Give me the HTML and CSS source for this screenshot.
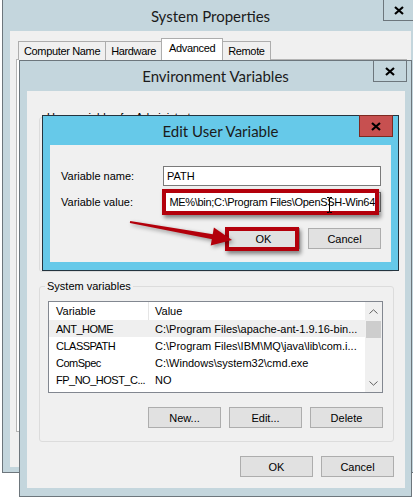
FILE: index.html
```html
<!DOCTYPE html>
<html lang="en">
<head>
    <meta charset="UTF-8">
    <title>Edit User Variable</title>
    <link rel="stylesheet" href="styles.css">
</head>
<body>
    <div class="desk">
        <!-- System Properties (back window) -->
        <section class="win win-sys">
            <div class="titlebar">
                <span>System Properties</span>
                <span class="close"><svg width="10" height="9" viewBox="0 0 10 9"><path d="M1 1 L9 8 M9 1 L1 8" stroke="#000" stroke-width="2.2"/></svg></span>
            </div>
            <div class="client">
                <div class="tabs">
                    <span class="tab">Computer Name</span>
                    <span class="tab">Hardware</span>
                    <span class="tab tab-active">Advanced</span>
                    <span class="tab">Remote</span>
                </div>
                <div class="tabpage"></div>
            </div>
        </section>

        <!-- Environment Variables -->
        <section class="win win-env">
            <div class="titlebar">
                <span>Environment Variables</span>
                <span class="close"><svg width="10" height="9" viewBox="0 0 10 9"><path d="M1 1 L9 8 M9 1 L1 8" stroke="#000" stroke-width="2.2"/></svg></span>
            </div>
            <div class="client env-body">
                <fieldset class="group group-user">
                    <legend>User variables for Administrator</legend>
                </fieldset>
                <fieldset class="group group-sys">
                    <legend>System variables</legend>
                    <div class="list">
                        <div class="list-rows">
                            <div class="row row-head"><span class="c-var">Variable</span><span class="c-val">Value</span></div>
                            <div class="row row-sel"><span class="c-var">ANT_HOME</span><span class="c-val">C:\Program Files\apache-ant-1.9.16-bin...</span></div>
                            <div class="row"><span class="c-var">CLASSPATH</span><span class="c-val">C:\Program Files\IBM\MQ\java\lib\com.i...</span></div>
                            <div class="row"><span class="c-var">ComSpec</span><span class="c-val">C:\Windows\system32\cmd.exe</span></div>
                            <div class="row"><span class="c-var">FP_NO_HOST_C...</span><span class="c-val">NO</span></div>
                            <div class="row"><span class="c-var">NUMBER_OF_P...</span><span class="c-val">4</span></div>
                        </div>
                        <div class="scroll">
                            <span class="sb-btn"><svg width="9" height="5" viewBox="0 0 9 5"><path d="M0.5 4.5 L4.5 0.8 L8.5 4.5" fill="none" stroke="#606060"/></svg></span>
                            <span class="sb-thumb"></span>
                            <span class="sb-track"></span>
                            <span class="sb-btn"><svg width="9" height="5" viewBox="0 0 9 5"><path d="M0.5 0.5 L4.5 4.2 L8.5 0.5" fill="none" stroke="#606060"/></svg></span>
                        </div>
                    </div>
                    <div class="buttons">
                        <button class="btn">New...</button>
                        <button class="btn">Edit...</button>
                        <button class="btn">Delete</button>
                    </div>
                </fieldset>
                <div class="buttons env-buttons">
                    <button class="btn">OK</button>
                    <button class="btn">Cancel</button>
                </div>
            </div>
        </section>

        <!-- Edit User Variable (active) -->
        <section class="win win-edit win-active">
            <div class="titlebar">
                <span>Edit User Variable</span>
                <span class="close close-red"><svg width="10" height="9" viewBox="0 0 10 9"><path d="M1 1 L9 8 M9 1 L1 8" stroke="#000" stroke-width="2.2"/></svg></span>
            </div>
            <div class="client edit-body">
                <div class="field">
                    <label>Variable name:</label>
                    <div class="box">PATH</div>
                </div>
                <div class="field">
                    <label>Variable value:</label>
                    <div class="box box-value"><span>ME%\bin;C:\Program Files\OpenSSH-Win64</span></div>
                </div>
                <div class="buttons edit-buttons">
                    <button class="btn">OK</button>
                    <button class="btn">Cancel</button>
                </div>
            </div>
        </section>

        <!-- annotations -->
        <div class="mark mark-value"></div>
        <div class="mark mark-ok"></div>
        <svg class="ibeam" width="7" height="18" viewBox="0 0 7 18">
            <path d="M1 1.5 H3 M4 1.5 H6 M3.5 1.5 V16.5 M1 16.5 H3 M4 16.5 H6" fill="none" stroke="#000" stroke-width="1"/>
        </svg>
        <svg class="arrow" width="413" height="497" viewBox="0 0 413 497">
            <polygon points="130.2,221 214.4,234.5 213.6,239.5 129.8,223" fill="#b3000b"/>
            <polygon points="232,240 213.9,227.6 210.7,245.4" fill="#b3000b"/>
        </svg>
    </div>
</body>
</html>
```

FILE: styles.css
```css
body {
    margin: 0;
    background-color: #fff;
    font-family: 'Liberation Sans', Arial, sans-serif;
    font-size: 11px;
    color: #000;
}
.desk {
    position: relative;
    width: 413px;
    height: 497px;
    overflow: hidden;
}

/* windows */
.win {
    position: absolute;
    box-sizing: border-box;
    display: flex;
    flex-direction: column;
    border: 1px solid #6d767c;
    background-color: #c4d6dd;
}
.win-active {
    border-color: #24343f;
    background-color: #66c9e9;
}
.titlebar {
    position: relative;
    flex-shrink: 0;
    display: flex;
    align-items: center;
    justify-content: center;
    font-family: Lato, 'Noto Sans', sans-serif;
    font-size: 15px;
    color: #1b1b1b;
}
.close {
    position: absolute;
    top: -1px;
    display: flex;
    align-items: center;
    justify-content: center;
    box-sizing: border-box;
    border: 1px solid #6d767c;
    background-color: #c4d6dd;
}
.close-red {
    border-color: #7d2a22;
    background-color: #c75050;
}
.client {
    flex: 1;
    box-sizing: border-box;
    background-color: #f0f0f0;
}

.win-sys {
    left: 2px;
    top: -1px;
    width: 417px;
    height: 474px;
}
.win-sys .titlebar {
    height: 31px;
}
.win-sys .close {
    right: 4px;
    width: 31px;
    height: 22px;
}
.win-sys .client {
    margin: 0 7px 5px 7px;
}

.win-env {
    left: 19px;
    top: 60px;
    width: 393px;
    height: 437px;
}
.win-env .titlebar {
    height: 30px;
}
.win-env .close {
    right: 4px;
    width: 34px;
    height: 22px;
}
.win-env .client {
    margin: 0 6px 8px 7px;
}

.win-edit {
    left: 42px;
    top: 115px;
    width: 357px;
    height: 156px;
}
.win-edit .titlebar {
    height: 29px;
}
.win-edit .close {
    right: 5px;
    width: 34px;
    height: 22px;
}
.win-edit .client {
    margin: 0 7px 8px 7px;
}

/* system properties tabs */
.tabs {
    display: flex;
    align-items: flex-end;
    height: 29px;
    box-sizing: border-box;
    padding: 10px 0 0 8px;
}
.tab {
    display: flex;
    align-items: center;
    height: 19px;
    box-sizing: border-box;
    padding: 0 5px;
    margin-right: -1px;
    border: 1px solid #adadad;
    border-bottom: none;
    background-color: #f0f0f0;
    letter-spacing: -0.35px;
}
.tab-active {
    position: relative;
    z-index: 1;
    height: 22px;
    padding: 0 7px 3px;
    background-color: #fff;
}
.tabpage {
    height: 371px;
    margin: -1px 4px 0 6px;
    border: 1px solid #b5b5b5;
    background-color: #fff;
}

/* environment variables */
.env-body {
    display: flex;
    flex-direction: column;
    padding: 20px 11px 11px 12px;
}
.group {
    margin: 0;
    padding: 8px 10px 13px 8px;
    min-width: 0;
    border: 1px solid #dcdcdc;
    border-radius: 3px;
}
.group legend {
    margin-left: -3px;
    padding: 0 2px;
    line-height: 13px;
}
.group-user {
    height: 161px;
    box-sizing: border-box;
}
.group-sys {
    margin-top: 8px;
}
.list {
    display: flex;
    height: 92px;
    box-sizing: border-box;
    border: 1px solid #828790;
    background-color: #fff;
    overflow: hidden;
}
.list-rows {
    flex: 1;
    overflow: hidden;
}
.row {
    display: flex;
    align-items: center;
    height: 17px;
    white-space: nowrap;
}
.row-head {
    height: 18px;
}
.row-sel {
    background-color: #efefef;
}
.c-var {
    width: 100px;
    flex-shrink: 0;
    box-sizing: border-box;
    padding-left: 7px;
    letter-spacing: -0.5px;
}
.c-val {
    flex: 1;
    padding-left: 6px;
    overflow: hidden;
}
.row-head .c-var {
    height: 18px;
    line-height: 18px;
    letter-spacing: 0;
    border-right: 1px solid #e5e5e5;
}
.scroll {
    display: flex;
    flex-direction: column;
    width: 17px;
    background-color: #f0f0f0;
}
.sb-btn {
    display: flex;
    align-items: center;
    justify-content: center;
    height: 18px;
}
.sb-thumb {
    height: 17px;
    margin: 1px 1px 0;
    background-color: #cdcdcd;
}
.sb-track {
    flex: 1;
}

.buttons {
    display: flex;
    justify-content: flex-end;
    gap: 8px;
    margin-top: 14px;
}
.btn {
    width: 73px;
    height: 21px;
    padding: 0;
    border: 1px solid #adadad;
    background-color: #e1e1e1;
    font-family: 'Liberation Sans', Arial, sans-serif;
    font-size: 11px;
    color: #000;
}

/* edit user variable */
.edit-body {
    display: flex;
    flex-direction: column;
    padding: 21px 10px 0 11px;
}
.field {
    display: flex;
    align-items: center;
    height: 20px;
}
.field + .field {
    margin-top: 6px;
}
.field label {
    width: 102px;
}
.box {
    display: flex;
    align-items: center;
    width: 218px;
    height: 20px;
    box-sizing: border-box;
    padding: 0 3px;
    border: 1px solid #7a7a7a;
    background-color: #fff;
    white-space: nowrap;
    overflow: hidden;
}
.box-value {
    justify-content: flex-end;
    padding-right: 5px;
    letter-spacing: -0.3px;
}
.edit-buttons {
    margin-top: 16px;
}

/* annotations */
.mark {
    position: absolute;
    box-sizing: border-box;
    border: 4px solid #b3000b;
    box-shadow: 2px 3px 4px rgba(0, 0, 0, 0.45);
}
.mark-value {
    left: 162px;
    top: 189px;
    width: 217px;
    height: 26px;
}
.mark-ok {
    left: 225px;
    top: 227px;
    width: 74px;
    height: 24px;
}
.ibeam {
    position: absolute;
    left: 326px;
    top: 196px;
}
.arrow {
    position: absolute;
    left: 0;
    top: 0;
    filter: drop-shadow(2px 2px 2px rgba(0, 0, 0, 0.4));
}
```
